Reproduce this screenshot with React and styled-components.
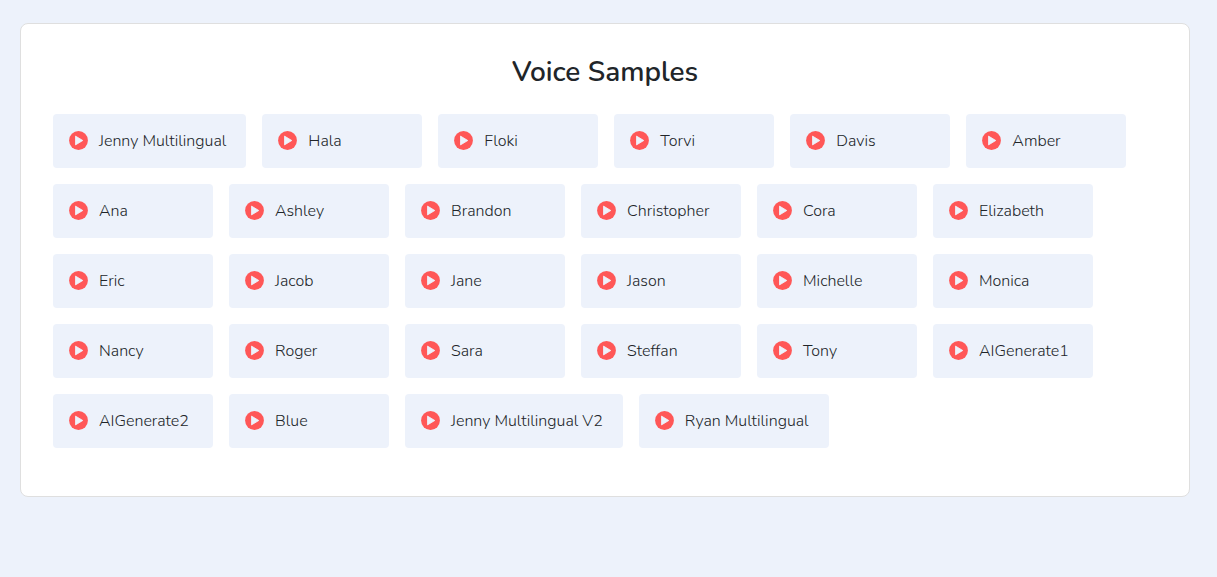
import React from 'react';
import styled, { createGlobalStyle } from 'styled-components';

const GlobalStyle = createGlobalStyle`
  *, *::before, *::after {
    box-sizing: border-box;
  }

  body {
    margin: 0;
    background-color: #edf2fb;
    color: #212529;
    font-family: Nunito, Lato, sans-serif;
    font-size: 16px;
  }
`;

const Page = styled.main`
  padding: 23px 27px 24px 20px;
`;

const Card = styled.section`
  padding: 32px 32px 48px;
  background-color: #fff;
  border: 1px solid #dfdfdf;
  border-radius: 8px;
`;

const Title = styled.h1`
  margin: 0 0 26px;
  font-size: 28px;
  font-weight: 600;
  line-height: 32px;
  text-align: center;
`;

const SampleList = styled.ul`
  display: flex;
  flex-wrap: wrap;
  gap: 16px;
  margin: 0;
  padding: 0;
  list-style: none;
`;

const SampleButton = styled.button`
  display: flex;
  align-items: center;
  gap: 11px;
  min-width: 160px;
  height: 54px;
  padding: 0 20px 0 16px;
  border: none;
  border-radius: 4px;
  background-color: #edf2fb;
  color: inherit;
  font: inherit;
  font-weight: 300;
  text-align: left;
  white-space: nowrap;
  cursor: pointer;
`;

// the box is a little taller than the disc, so the disc sits near the cap height
const Icon = styled.svg`
  flex: none;
  width: 19px;
  height: 21px;
`;

// all the voices, in the order they are shown
const voices = [
  'Jenny Multilingual', 'Hala', 'Floki', 'Torvi', 'Davis', 'Amber',
  'Ana', 'Ashley', 'Brandon', 'Christopher', 'Cora', 'Elizabeth',
  'Eric', 'Jacob', 'Jane', 'Jason', 'Michelle', 'Monica',
  'Nancy', 'Roger', 'Sara', 'Steffan', 'Tony', 'AIGenerate1',
  'AIGenerate2', 'Blue', 'Jenny Multilingual V2', 'Ryan Multilingual',
];

function PlayIcon() {
  return (
    <Icon viewBox="0 0 19 21" aria-hidden="true">
      <circle cx="9.5" cy="9.5" r="9.4" fill="#ff5757" />
      <path
        d="M6.5 5.1v8.8l7.3-4.4z"
        fill="#edf2fb"
        stroke="#edf2fb"
        strokeWidth="0.8"
        strokeLinejoin="round"
      />
    </Icon>
  );
}

function Sample({ name }) {
  return (
    <li>
      <SampleButton type="button">
        <PlayIcon />
        {name}
      </SampleButton>
    </li>
  );
}

export default function App() {
  return (
    <>
      <GlobalStyle />
      <Page>
        <Card>
          <Title>Voice Samples</Title>
          <SampleList>
            {voices.map((name) => (
              <Sample key={name} name={name} />
            ))}
          </SampleList>
        </Card>
      </Page>
    </>
  );
}
